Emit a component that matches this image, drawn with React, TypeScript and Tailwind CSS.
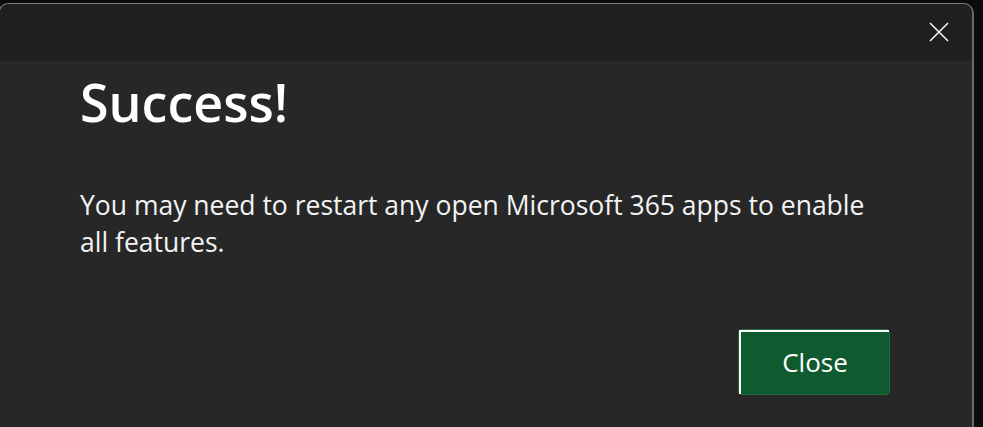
import React from 'react';

const CloseIcon: React.FC = () => (
  <svg width="20" height="20" viewBox="0 0 20 20" fill="none">
    <path d="M1 1L19 19M19 1L1 19" stroke="#f2f2f2" strokeWidth="1.6" />
  </svg>
);

const App: React.FC = () => {
  return (
    <div className="w-[983px] h-[427px] bg-[#0b0b0b] pt-[3px] overflow-hidden" style={{ fontFamily: '"Open Sans", "Noto Sans", sans-serif' }}>
      <div className="ml-[-2px] w-[976px] h-[440px] rounded-t-[10px] border-t border-l-2 border-r-2 border-t-[#7c7c7c] border-l-[#6a6a6a] border-r-[#6a6a6a] bg-[#272727] overflow-hidden flex flex-col">
        {/* Title bar */}
        <div className="h-[57px] bg-[#202020] flex items-start justify-end pr-[23px] pt-[18px] shrink-0">
          <button className="p-0">
            <CloseIcon />
          </button>
        </div>

        {/* Body */}
        <div className="pl-[80px] pr-[100px] flex flex-col">
          <h1 className="text-[52px] leading-[60px] font-semibold text-white mt-[11px]">Success!</h1>
          <p className="text-[26.5px] leading-[37px] text-[#f3f3f3] mt-[55px] w-[805px]">
            You may need to restart any open Microsoft 365 apps to enable all features.
          </p>
          <div className="flex justify-end w-[810px] mt-[68px]">
            <button className="w-[152px] h-[66px] rounded-[4px] border border-[#1f6b3f] bg-[#0f5b2f] text-white text-[26px] flex items-center justify-center">
              <span className="w-full h-full border-t-2 border-l-2 border-white flex items-center justify-center pb-[2px]">Close</span>
            </button>
          </div>
        </div>
      </div>
    </div>
  );
};

export default App;
